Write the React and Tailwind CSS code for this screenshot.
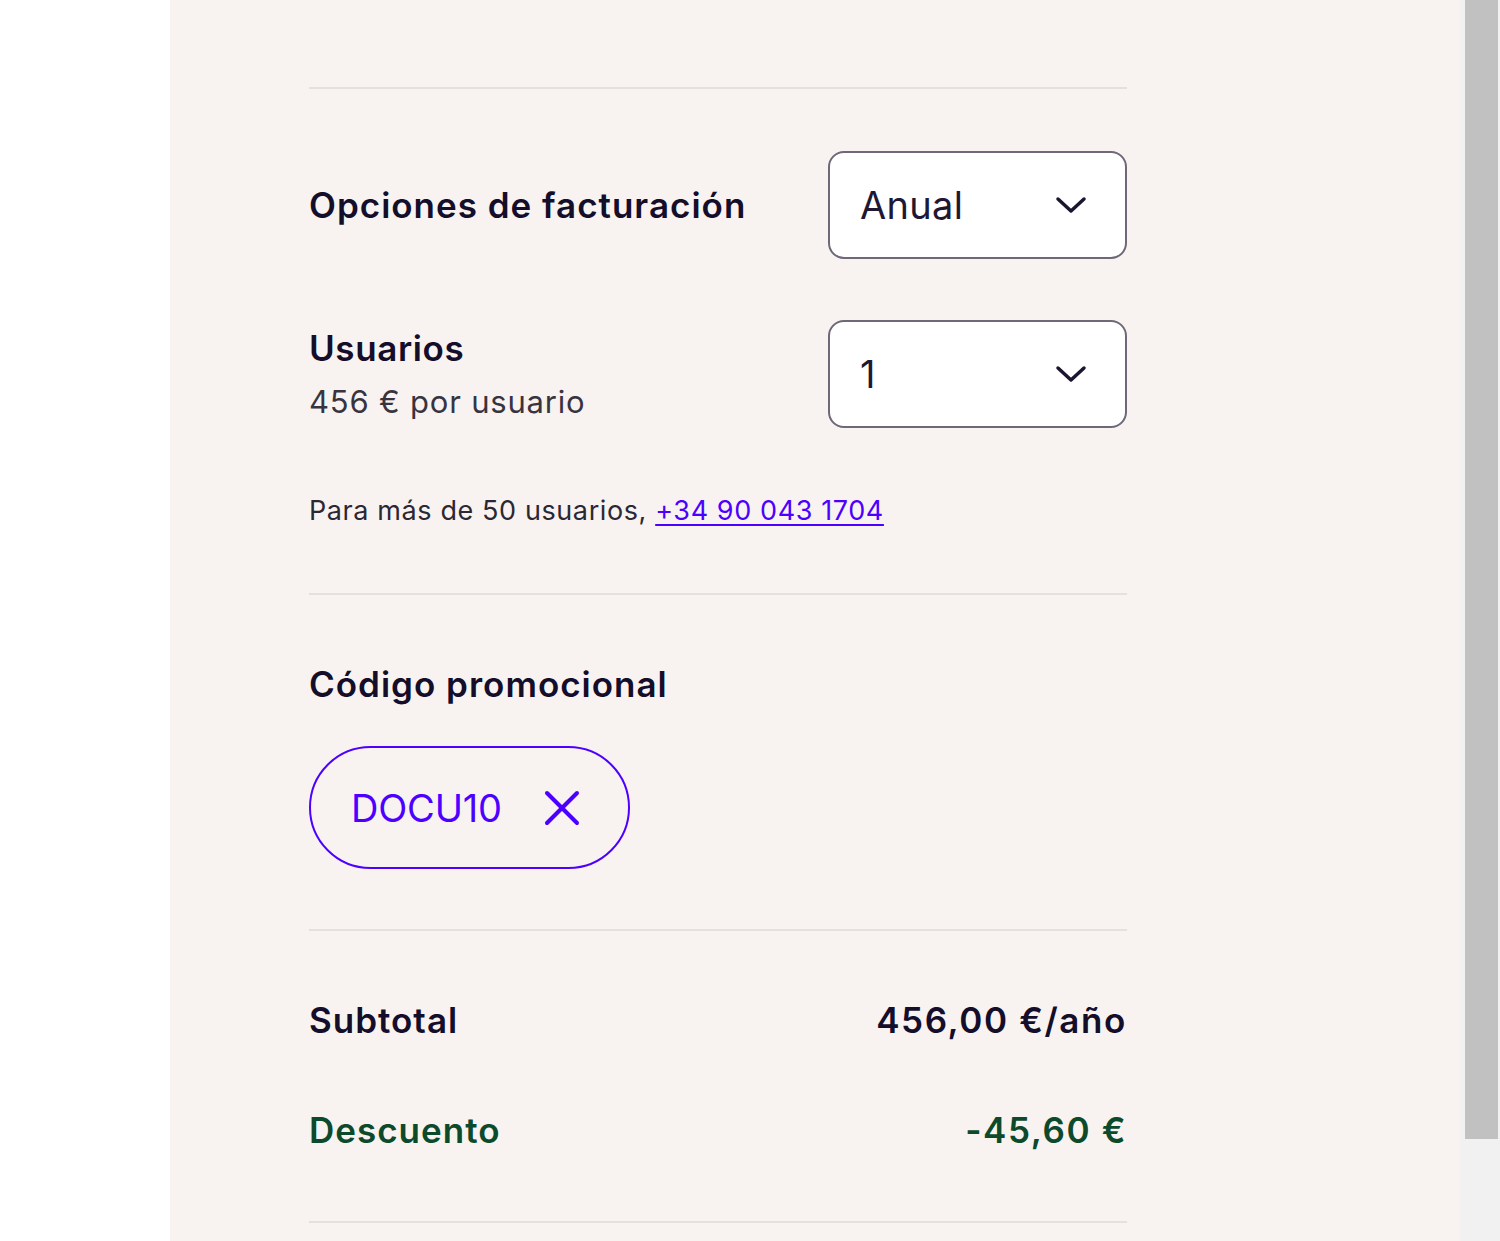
import React from "react";

function Chevron() {
  return (
    <svg width="32" height="18" viewBox="0 0 32 18" fill="none" className="shrink-0">
      <polyline points="3,3 16,15 29,3" stroke="#1b1530" strokeWidth="3.5" strokeLinecap="round" strokeLinejoin="round" />
    </svg>
  );
}

function Select({ value }) {
  return (
    <div className="w-[299px] h-[108px] shrink-0 bg-white border-2 border-[#6e6879] rounded-[16px] flex items-center justify-between pl-[30px] pr-[38px]">
      <span className="text-[38px] leading-none text-[#1e1833] tracking-[0.3px]">{value}</span>
      <Chevron />
    </div>
  );
}

function Divider({ className = "" }) {
  return <div className={"h-[2px] bg-[#e4e0dd] w-full " + className} />;
}

export default function App() {
  const font = { fontFamily: "Inter, 'Noto Sans', sans-serif" };
  return (
    <div className="flex h-[1241px] overflow-hidden" style={font}>
      <div className="w-[170px] shrink-0 bg-white" />
      <div className="flex-1 bg-[#f8f3f0] pl-[139px]">
        <div className="w-[818px] pt-[87px]">
          <Divider />

          <div className="mt-[62px] flex items-center justify-between">
            <div className="text-[35px] leading-[44px] font-semibold text-[#140e2b] tracking-[1px]">
              Opciones de facturación
            </div>
            <Select value="Anual" />
          </div>

          <div className="mt-[61px] flex items-start justify-between">
            <div className="pt-[6px]">
              <div className="text-[35px] leading-[44px] font-semibold text-[#140e2b] tracking-[0.6px]">Usuarios</div>
              <div className="mt-[12px] text-[31px] leading-[40px] text-[#38343f] tracking-[0.8px]">456 € por usuario</div>
            </div>
            <Select value="1" />
          </div>

          <div className="mt-[65px] text-[27px] leading-[36px] text-[#2b2833] tracking-[0.6px]">
            Para más de 50 usuarios,{" "}
            <a href="#" className="text-[#4c00ff] underline underline-offset-[4px] decoration-2">+34 90 043 1704</a>
          </div>

          <Divider className="mt-[64px]" />

          <div className="mt-[67px] text-[35px] leading-[44px] font-semibold text-[#140e2b] tracking-[1px]">
            Código promocional
          </div>

          <div className="mt-[40px] w-[321px] h-[123px] rounded-full border-2 border-[#4c00ff] flex items-center pl-[40px] gap-[42px]">
            <span className="text-[38px] leading-none text-[#4c00ff] tracking-[-0.2px]">DOCU10</span>
            <svg width="36" height="36" viewBox="0 0 36 36" fill="none">
              <line x1="3" y1="3" x2="33" y2="33" stroke="#4c00ff" strokeWidth="4" strokeLinecap="round" />
              <line x1="33" y1="3" x2="3" y2="33" stroke="#4c00ff" strokeWidth="4" strokeLinecap="round" />
            </svg>
          </div>

          <Divider className="mt-[60px]" />

          <div className="mt-[67px] flex items-center justify-between text-[35px] leading-[44px] font-semibold text-[#140e2b] tracking-[1px]">
            <span>Subtotal</span>
            <span className="tracking-[1.6px]">456,00 €/año</span>
          </div>

          <div className="mt-[66px] flex items-center justify-between text-[35px] leading-[44px] font-semibold text-[#0c4a2b] tracking-[1px]">
            <span>Descuento</span>
            <span className="tracking-[1.6px]">-45,60 €</span>
          </div>

          <Divider className="mt-[69px]" />
        </div>
      </div>
      <div className="w-[40px] shrink-0 bg-[#f1f1f1] pl-[5px] pr-[2px]">
        <div className="h-[1139px] bg-[#c1c1c1]" />
      </div>
    </div>
  );
}
